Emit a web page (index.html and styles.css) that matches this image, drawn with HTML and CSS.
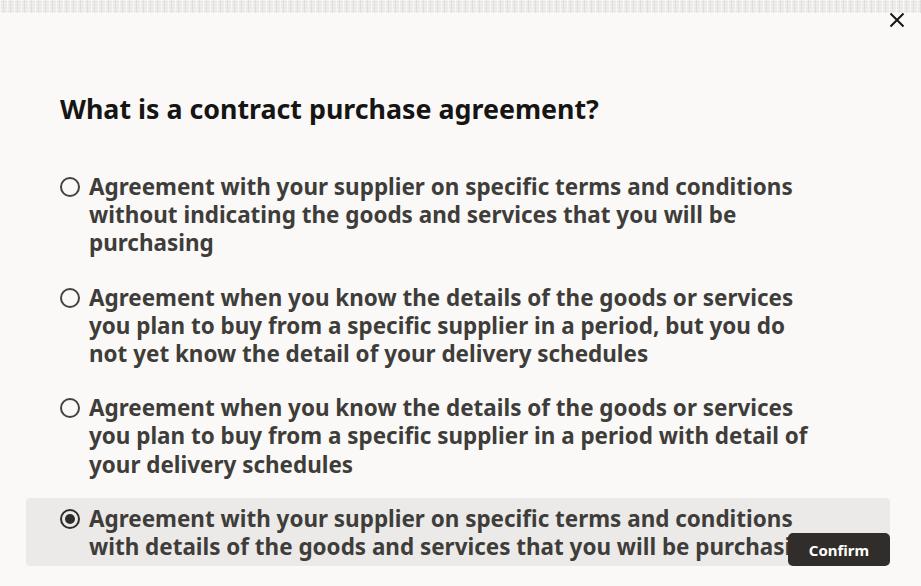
FILE: index.html
```html
<!DOCTYPE html>
<html lang="en">
<head>
<meta charset="utf-8">
<title>Quiz</title>
<link rel="stylesheet" href="styles.css">
</head>
<body>
<div class="strip"></div>
<button class="close" aria-label="Close">
  <svg width="16" height="16" viewBox="0 0 16 16"><path d="M1.5 1.5 L14.5 14.5 M14.5 1.5 L1.5 14.5" stroke="#161513" stroke-width="2" fill="none"/></svg>
</button>
<main class="dialog">
  <h1 class="title">What is a contract purchase agreement?</h1>
  <div class="options">
    <label class="option">
      <span class="radio"></span>
      <span class="text">Agreement with your supplier on specific terms and conditions without indicating the goods and services that you will be purchasing</span>
    </label>
    <label class="option">
      <span class="radio"></span>
      <span class="text">Agreement when you know the details of the goods or services you plan to buy from a specific supplier in a period, but you do not yet know the detail of your delivery schedules</span>
    </label>
    <label class="option">
      <span class="radio"></span>
      <span class="text">Agreement when you know the details of the goods or services you plan to buy from a specific supplier in a period with detail of your delivery schedules</span>
    </label>
    <label class="option selected">
      <span class="radio checked"></span>
      <span class="text">Agreement with your supplier on specific terms and conditions with details of the goods and services that you will be purchasing</span>
      <button class="confirm">Confirm</button>
    </label>
  </div>
</main>
</body>
</html>
```

FILE: styles.css
```css
html, body {
  margin: 0;
  padding: 0;
  height: 100%;
  overflow: hidden;
}
body {
  background: #faf9f8;
  font-family: "Noto Sans", "Open Sans", sans-serif;
  position: relative;
}
.strip {
  height: 13px;
  background-color: #ebe9e6;
  background-image:
    repeating-linear-gradient(90deg, rgba(255,255,255,0.55) 0 1px, transparent 1px 3px, rgba(200,198,195,0.35) 3px 4px, transparent 4px 7px),
    repeating-linear-gradient(0deg, rgba(255,255,255,0.4) 0 1px, transparent 1px 3px);
}
.close {
  position: absolute;
  top: 12px;
  right: 16px;
  width: 16px;
  height: 16px;
  padding: 0;
  border: 0;
  background: transparent;
  display: flex;
}
.dialog {
  padding: 79px 31px 0 26px;
}
.title {
  margin: 0 0 40px 34px;
  font-size: 26.8px;
  line-height: 34px;
  font-weight: 700;
  color: #161513;
}
.options {
  display: flex;
  flex-direction: column;
  gap: 14px;
}
.option {
  position: relative;
  display: flex;
  align-items: flex-start;
  gap: 9px;
  padding: 7px 0 5px 34px;
  border-radius: 4px;
}
.option.selected {
  background: #ebeae8;
}
.text {
  width: 739px;
  font-size: 22.45px;
  line-height: 28.2px;
  font-weight: 700;
  color: #3f3d3a;
}
.radio {
  flex: none;
  width: 20px;
  height: 20px;
  margin-top: 4px;
  box-sizing: border-box;
  border: 2px solid #45423f;
  border-radius: 50%;
  display: flex;
  align-items: center;
  justify-content: center;
}
.radio.checked {
  border-color: #2f2c2a;
}
.radio.checked::after {
  content: "";
  width: 10px;
  height: 10px;
  border-radius: 50%;
  background: #2f2c2a;
}
.confirm {
  position: absolute;
  right: 0;
  bottom: 0;
  width: 102px;
  height: 33px;
  border: 0;
  border-radius: 5px;
  background: #312d2a;
  color: #ffffff;
  font-family: "Noto Sans", "Open Sans", sans-serif;
  font-size: 15px;
  font-weight: 700;
  padding: 0;
}
```
